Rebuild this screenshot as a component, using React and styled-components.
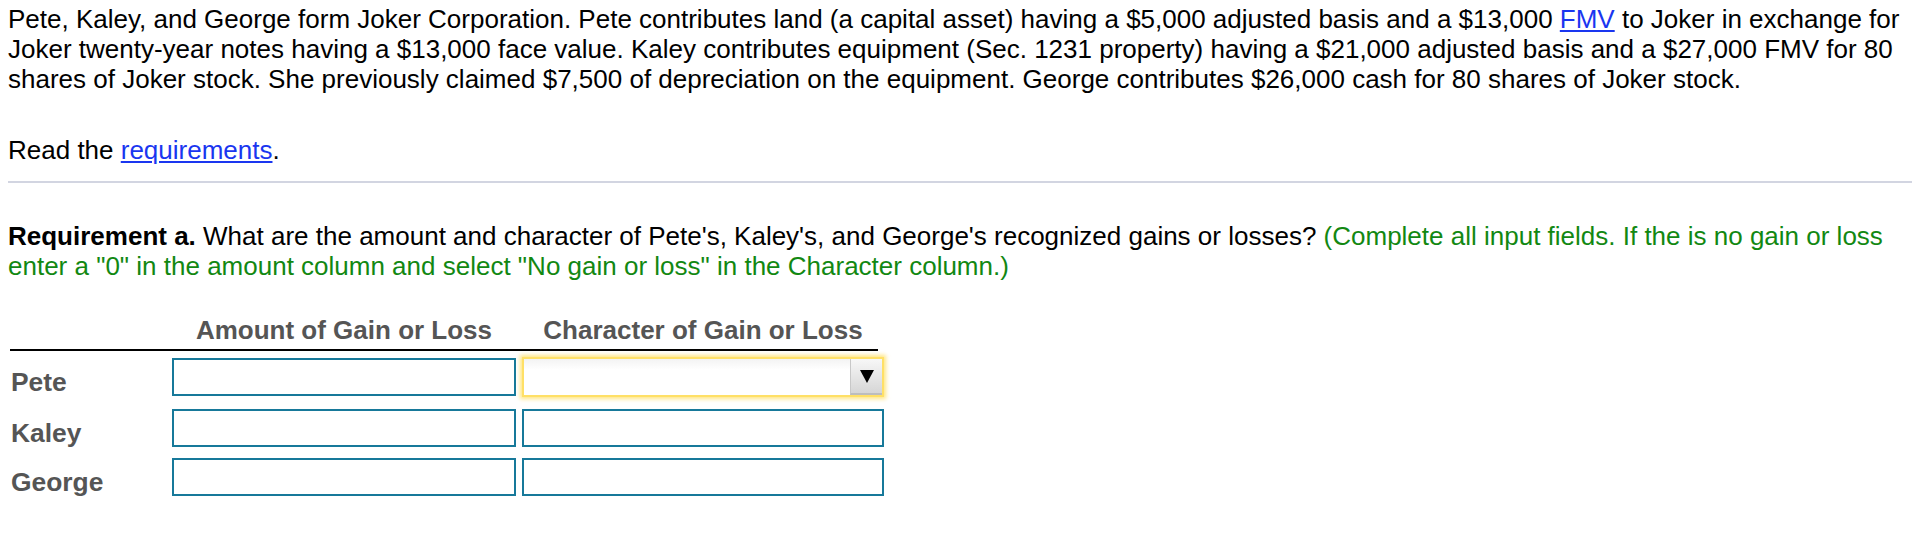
import React from "react";
import styled, { createGlobalStyle } from "styled-components";

const Global = createGlobalStyle`
  html, body { margin: 0; padding: 0; background: #fff; }
  body { font-family: "Liberation Sans", Arial, Helvetica, sans-serif; }
`;

const Page = styled.div`
  padding: 4px 8px 0 8px;
  font-size: 26px;
  line-height: 30px;
  color: #000;
`;

const Para = styled.p`
  margin: ${(p) => p.$top || 0}px 0 0 0;
`;

const Link = styled.a`
  color: #1a36f0;
  text-decoration: underline;
  text-underline-offset: 2px;
  cursor: pointer;
`;

const Rule = styled.hr`
  margin: 16px 0 0 0;
  border: none;
  height: 2px;
  background: #d2d5e1;
`;

const Bold = styled.b`
  font-weight: bold;
`;

const Hint = styled.span`
  color: #128812;
`;

const Table = styled.div`
  margin: 34px 0 0 2px;
  width: 868px;
`;

const HeadRow = styled.div`
  display: grid;
  grid-template-columns: 156px 344px 362px;
  column-gap: 6px;
  border-bottom: 2px solid #000;
  padding-bottom: 4px;
`;

const HeadCell = styled.div`
  font-weight: bold;
  font-size: 26px;
  line-height: 30px;
  color: #555;
  text-align: center;
  white-space: nowrap;
`;

const Body = styled.div`
  display: grid;
  grid-template-columns: 156px 344px 362px;
  column-gap: 6px;
  row-gap: 11.5px;
  padding-top: 7px;
`;

const Label = styled.div`
  font-weight: bold;
  font-size: 26.4px;
  line-height: 38px;
  padding-top: 5px;
  height: 38px;
  box-sizing: border-box;
  padding-left: 1px;
  color: #555;
  white-space: nowrap;
`;

const Field = styled.div`
  height: 38px;
  box-sizing: border-box;
  border: 2px solid #17799a;
  background: #fff;
`;

const Select = styled.div`
  height: 40px;
  margin-top: -1px;
  box-sizing: border-box;
  border: 2px solid #ffe066;
  box-shadow: 0 0 4px 2px rgba(255, 221, 90, 0.75);
  background: linear-gradient(#f3f3f3, #ffffff 30%);
  display: flex;
  justify-content: flex-end;
`;

const DropButton = styled.div`
  width: 32px;
  box-sizing: border-box;
  border-left: 1px solid #c8c8c8;
  border-bottom: 2px solid #bdbdbd;
  background: linear-gradient(#f7f7f7, #d6d6d6);
  display: flex;
  align-items: center;
  justify-content: center;
`;

const Arrow = () => (
  <svg width="14" height="13" viewBox="0 0 14 13">
    <polygon points="0,0 14,0 7,13" fill="#000" />
  </svg>
);

export default function App() {
  const rows = ["Pete", "Kaley", "George"];
  return (
    <>
      <Global />
      <Page>
        <Para>
          Pete, Kaley, and George form Joker Corporation. Pete contributes land (a capital asset) having a
          $5,000 adjusted basis and a $13,000 <Link>FMV</Link> to Joker in exchange for Joker twenty-year notes
          having a $13,000 face value. Kaley contributes equipment (Sec. 1231 property) having a $21,000 adjusted
          basis and a $27,000 FMV for 80 shares of Joker stock. She previously claimed $7,500 of depreciation on
          the equipment. George contributes $26,000 cash for 80 shares of Joker stock.
        </Para>
        <Para $top={41}>
          Read the <Link>requirements</Link>.
        </Para>
        <Rule />
        <Para $top={38}>
          <Bold>Requirement a.</Bold> What are the amount and character of Pete's, Kaley's, and George's
          recognized gains or losses?{" "}
          <Hint>
            (Complete all input fields. If the is no gain or loss enter a "0" in the amount column and select
            "No gain or loss" in the Character column.)
          </Hint>
        </Para>
        <Table>
          <HeadRow>
            <div />
            <HeadCell>Amount of Gain or Loss</HeadCell>
            <HeadCell>Character of Gain or Loss</HeadCell>
          </HeadRow>
          <Body>
            {rows.map((name, i) => (
              <React.Fragment key={name}>
                <Label>{name}</Label>
                <Field />
                {i === 0 ? (
                  <Select>
                    <DropButton>
                      <Arrow />
                    </DropButton>
                  </Select>
                ) : (
                  <Field />
                )}
              </React.Fragment>
            ))}
          </Body>
        </Table>
      </Page>
    </>
  );
}
